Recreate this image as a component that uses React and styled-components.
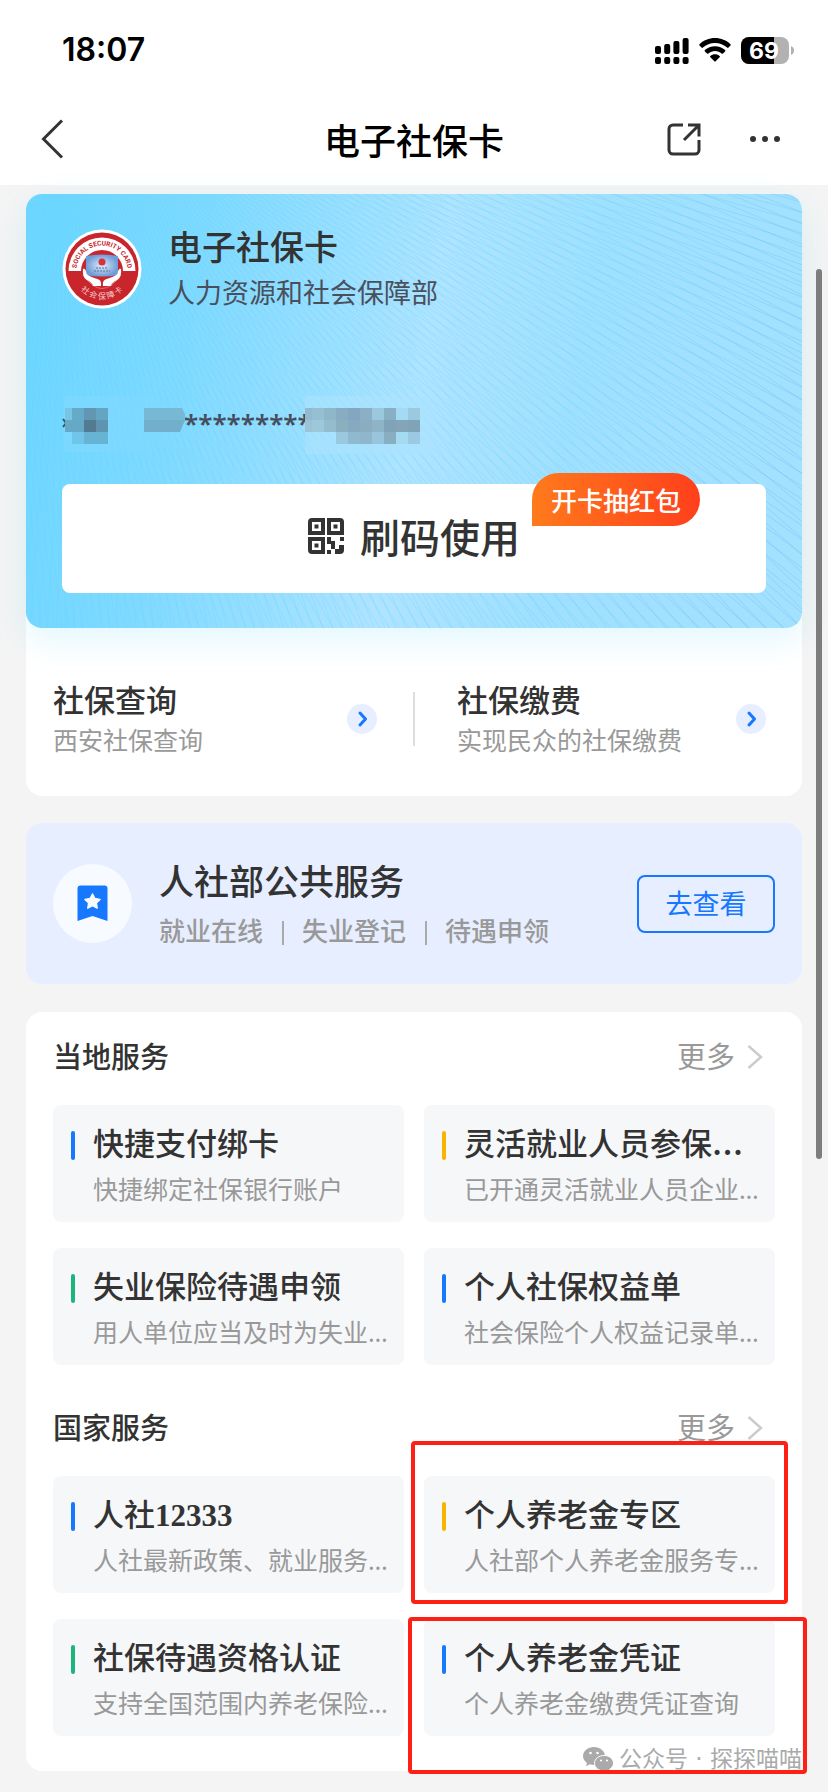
import React from 'react';
import styled, { createGlobalStyle, css } from 'styled-components';

const GlobalStyle = createGlobalStyle`
  * {
    box-sizing: border-box;
  }

  body {
    margin: 0;
    background: #f4f4f4;
    color: #333;
    font-family: 'Noto Sans CJK SC', sans-serif;
  }

  h1, h2, h3, p {
    margin: 0;
    font-weight: 500;
  }

  a {
    color: inherit;
    text-decoration: none;
  }

  button {
    padding: 0;
    border: 0;
    background: none;
    color: inherit;
    font-family: inherit;
    cursor: pointer;
  }

  svg {
    display: block;
    flex: none;
  }
`;

const Page = styled.div`
  position: relative;
  min-height: 100vh;
`;

const TopArea = styled.header`
  background: #fff;
`;

const StatusBar = styled.div`
  display: flex;
  align-items: center;
  justify-content: space-between;
  height: 98px;
  padding: 2px 34px 0 62px;
`;

const Clock = styled.time`
  color: #000;
  font: 600 32px/40px Inter, sans-serif;
`;

const StatusIcons = styled.div`
  display: flex;
  align-items: center;
  gap: 10px;
`;

const NavBar = styled.nav`
  display: grid;
  grid-template-columns: 1fr auto 1fr;
  align-items: center;
  height: 87px;
  padding: 0 40px 6px;
`;

const NavTitle = styled.h1`
  color: #000;
  font-size: 36px;
  line-height: 50px;
`;

const NavActions = styled.div`
  display: flex;
  align-items: center;
  justify-content: flex-end;
  gap: 48px;
  padding-right: 7px;
`;

const Main = styled.main`
  padding: 9px 26px 21px;
`;

const Panel = styled.section`
  position: relative;
  margin-bottom: 27px;
  background: #fff;
  border-radius: 16px;
`;

const Card = styled.div`
  position: relative;
  padding: 29px 36px 35px;
  border-radius: 16px;
  background: linear-gradient(100deg, #70d6ff 4%, #82d9ff 22%, #b0e3ff 50%, #a0e0ff 68%, #a2e2ff 100%);
  box-shadow: 0 12px 36px rgba(0, 190, 240, 0.12);
`;

const Guilloche = styled.svg`
  position: absolute;
  inset: 0;
  width: 100%;
  height: 100%;
  border-radius: 16px;
`;

const CardHead = styled.div`
  position: relative;
  display: flex;
  align-items: center;
  gap: 26px;
`;

const CardTitle = styled.h2`
  font-size: 34px;
  line-height: 46px;
`;

const CardOwner = styled.p`
  color: #4a4f5c;
  font-size: 27px;
  font-weight: 400;
  line-height: 46px;
`;

const CardNumber = styled.div`
  position: relative;
  display: flex;
  height: 60px;
  margin: 81px 0 28px;

  svg {
    position: relative;
  }
`;

const Stars = styled.span`
  margin: 0 -7px 0 -1px;
  color: #474c5c;
  font: 600 26px/54px 'Noto Sans', sans-serif;
`;

const ScanButton = styled.button`
  position: relative;
  display: flex;
  align-items: center;
  justify-content: center;
  gap: 16px;
  width: 100%;
  height: 109px;
  padding-bottom: 6px;
  border-radius: 8px;
  background: #fff;
  color: #333;
  font-size: 40px;
  font-weight: 500;
`;

const Badge = styled.span`
  position: absolute;
  top: -11px;
  right: 66px;
  padding: 0 19px;
  border-radius: 27px 27px 27px 0;
  background: linear-gradient(90deg, #ff7a1c, #ff3f1c);
  color: #fff;
  font-size: 26px;
  font-weight: 500;
  line-height: 53px;
`;

const QueryRow = styled.div`
  display: grid;
  grid-template-columns: 1fr 2px 1fr;
  align-items: center;
  padding: 51px 0 37px;
`;

const Divider = styled.span`
  height: 54px;
  background: #ddd;
`;

const QueryLink = styled.a`
  display: flex;
  align-items: center;
  justify-content: space-between;
  padding: 0 36px 0 ${props => (props.$second ? 42 : 27)}px;
`;

const titleStyle = css`
  font-size: 31px;
  line-height: 40px;
`;

const QueryTitle = styled.h3`
  ${titleStyle}
`;

const QueryText = styled.p`
  color: #999;
  font-size: 25px;
  font-weight: 400;
  line-height: 40px;
`;

const Banner = styled.section`
  display: flex;
  align-items: center;
  height: 161px;
  margin-bottom: 28px;
  padding: 0 27px;
  border-radius: 16px;
  background: #e7eeff;
`;

const BannerBody = styled.div`
  flex: 1;
  padding: 3px 0 0 27px;
`;

const BannerTitle = styled.h2`
  font-size: 35px;
  line-height: 50px;
`;

const BannerTags = styled.p`
  display: flex;
  align-items: center;
  gap: 19px;
  color: #999;
  font-size: 26px;
  font-weight: 500;
  line-height: 50px;

  span + span {
    position: relative;
    padding-left: 20px;

    &::before {
      content: '';
      position: absolute;
      left: 0;
      top: 16px;
      width: 2px;
      height: 24px;
      background: #aaa;
    }
  }
`;

const ViewButton = styled.button`
  width: 138px;
  height: 58px;
  padding-bottom: 2px;
  border: 2px solid #1677ff;
  border-radius: 8px;
  color: #1677ff;
  font-size: 27px;
`;

const ServicePanel = styled(Panel)`
  margin-bottom: 0;
  padding: 0 27px 35px;
`;

const SectionHead = styled.div`
  display: flex;
  align-items: center;
  justify-content: space-between;
  height: 86px;
  margin-bottom: 7px;
`;

const SectionTitle = styled.h2`
  font-size: 29px;
  line-height: 40px;
`;

const MoreLink = styled.a`
  display: flex;
  align-items: center;
  gap: 12px;
  padding-right: 12px;
  color: #999;
  font-size: 29px;
  line-height: 40px;

  svg {
    margin-top: 4px;
  }
`;

const TileGrid = styled.div`
  display: grid;
  grid-template-columns: 1fr 1fr;
  gap: 26px 20px;

  & + ${SectionHead} {
    margin-top: 18px;
  }
`;

const Tile = styled.a`
  position: relative;
  display: grid;
  grid-template-columns: 4px 1fr;
  column-gap: 18px;
  align-items: center;
  padding: 20px 0 15px 18px;
  border-radius: 8px;
  background: #f6f7f9;
  white-space: nowrap;
`;

const TileBar = styled.span`
  height: 29px;
  border-radius: 2px;
  background: ${props => props.$color};
`;

const TileTitle = styled.h3`
  ${titleStyle}
  font-family: 'Liberation Serif', 'Noto Sans CJK SC', serif;
`;

const TileText = styled.p`
  grid-column: 2;
  padding-top: 6px;
  color: #999;
  font-family: 'Noto Sans', 'Noto Sans CJK SC', sans-serif;
  font-size: 25px;
  font-weight: 400;
  line-height: 36px;
`;

const Mark = styled.span`
  position: absolute;
  z-index: 1;
  inset: ${props => props.$inset};
  border: 4px solid #ff2015;
  border-radius: 4px;
`;

const Watermark = styled.div`
  position: absolute;
  right: 0;
  bottom: -6px;
  display: flex;
  align-items: center;
  gap: 5px;
  color: #aaa;
  font-family: 'DejaVu Sans', 'Noto Sans CJK SC', sans-serif;
  font-size: 23px;
  line-height: 36px;
`;

const ScrollThumb = styled.div`
  position: absolute;
  top: 269px;
  right: 6px;
  width: 6px;
  height: 890px;
  border-radius: 3px;
  background: #7d7d7d;
`;

const BLUE = '#1677ff';
const YELLOW = '#fab400';
const GREEN = '#1cb57e';

const sections = [
  {
    title: '当地服务',
    tiles: [
      { title: '快捷支付绑卡', text: '快捷绑定社保银行账户', color: BLUE },
      { title: '灵活就业人员参保', more: '…', text: '已开通灵活就业人员企业…', color: YELLOW },
      { title: '失业保险待遇申领', text: '用人单位应当及时为失业…', color: GREEN },
      { title: '个人社保权益单', text: '社会保险个人权益记录单…', color: BLUE },
    ],
  },
  {
    title: '国家服务',
    tiles: [
      { title: '人社', more: '12333', text: '人社最新政策、就业服务…', color: BLUE },
      {
        title: '个人养老金专区',
        text: '人社部个人养老金服务专…',
        color: YELLOW,
        mark: '-35px -13px -11px -13px',
      },
      { title: '社保待遇资格认证', text: '支持全国范围内养老保险…', color: GREEN },
      {
        title: '个人养老金凭证',
        text: '个人养老金缴费凭证查询',
        color: BLUE,
        mark: '-2px -32px -38px -16px',
      },
    ],
  },
];

const SignalIcon = () => (
  <svg width="34" height="27" viewBox="0 0 34 27">
    {[9, 7, 4, 1].map((top, i) => (
      <g key={top}>
        <rect x={i * 9.2} y={top} width="6" height={17 - top} rx="2" />
        <rect x={i * 9.2} y="20" width="6" height="7" rx="2" />
      </g>
    ))}
  </svg>
);

const WifiIcon = () => (
  <svg width="32" height="24" viewBox="0 0 32 24">
    <path d="M16 0C10 0 4.500 2.300.5 6.200c-.4.400-.4 1 0 1.400l2 2c.4.400 1 .4 1.400 0C7.100 6.800 11.300 5 16 5s8.900 1.800 12.100 4.600c.4.400 1 .4 1.400 0l2-2c.4-.4.4-1 0-1.400C27.500 2.300 22 0 16 0z" />
    <path d="M16 8.200c-3.900 0-7.400 1.500-10.100 3.900-.4.400-.4 1 0 1.400l2.100 2c.4.400 1 .3 1.400 0 1.800-1.500 4.100-2.400 6.600-2.400s4.800.9 6.600 2.400c.4.300 1 .4 1.400 0l2.100-2c.4-.4.4-1 0-1.400-2.700-2.400-6.200-3.900-10.100-3.900z" />
    <path d="M16 16.200c-1.800 0-3.400.6-4.600 1.700-.5.400-.4 1 0 1.400l3.900 4c.4.400 1 .4 1.400 0l3.900-4c.4-.4.5-1 0-1.400-1.200-1.100-2.800-1.700-4.600-1.700z" />
  </svg>
);

const BatteryIcon = () => (
  <svg width="53" height="27" viewBox="0 0 53 27">
    <clipPath id="battery">
      <rect width="48" height="27" rx="8" />
    </clipPath>
    <g clipPath="url(#battery)">
      <rect width="48" height="27" fill="#b2b2b2" />
      <rect width="33" height="27" />
    </g>
    <path d="M50 9c2 .7 3 2.500 3 4.500s-1 3.800-3 4.500z" fill="#b2b2b2" />
    <text x="23" y="22" textAnchor="middle" fill="#fff" fontFamily="Inter" fontSize="23" fontWeight="700">
      69
    </text>
  </svg>
);

const BackIcon = () => (
  <svg width="24" height="40" viewBox="0 0 24 40" fill="none" stroke="#333" strokeWidth="3">
    <path d="M22 1.500L3.500 20 22 38.500" />
  </svg>
);

const ShareIcon = () => (
  <svg width="34" height="34" viewBox="0 0 34 34" fill="none" stroke="#333" strokeWidth="3">
    <path d="M16 3H6a4 4 0 0 0-4 4v21a4 4 0 0 0 4 4h22a4 4 0 0 0 4-4V18" />
    <path d="M21 3h11v11.500M31.500 3.500L17 18" />
  </svg>
);

const DotsIcon = () => (
  <svg width="32" height="8" viewBox="0 0 32 8" fill="#333">
    <circle cx="4" cy="4" r="3" />
    <circle cx="16" cy="4" r="3" />
    <circle cx="28" cy="4" r="3" />
  </svg>
);

const Logo = () => (
  <svg width="80" height="80" viewBox="0 0 80 80">
    <defs>
      <path id="arcTop" d="M14.500 42a25.500 25.500 0 0 1 51 0" />
      <path id="arcBottom" d="M10 40a30 30 0 0 0 60 0" />
      <radialGradient id="screen">
        <stop offset="0" stopColor="#e3edf9" />
        <stop offset="1" stopColor="#6f9cd8" />
      </radialGradient>
    </defs>
    <circle cx="40" cy="40" r="39.500" fill="#fff" />
    <circle cx="40" cy="40" r="36.500" fill="#c9252d" />
    <path d="M6.500 42a33.500 33.500 0 0 1 67 0H61a21 21 0 0 0-42 0z" fill="#fff" />
    <text fill="#c9252d" fontFamily="Roboto, sans-serif" fontSize="6.600" fontWeight="700">
      <textPath href="#arcTop" startOffset="50%" textAnchor="middle">
        SOCIAL SECURITY CARD
      </textPath>
    </text>
    <text fill="#f6c9cb" fontFamily="Noto Sans CJK SC" fontSize="8">
      <textPath href="#arcBottom" startOffset="50%" textAnchor="middle">
        社 会 保 障 卡
      </textPath>
    </text>
    <path d="M21 46q19 27 38 0" fill="none" stroke="#e58a8e" strokeWidth=".7" />
    <path d="M24 27q16-3 32 0v19q-16 3-32 0z" fill="url(#screen)" />
    <circle cx="40" cy="33" r="3.500" fill="#d9303a" />
    <path d="M32 42h16M34 39h12" stroke="#5670a0" strokeWidth="1.200" strokeDasharray="2 1" />
    <path d="M21 40c2-1 3 1 3.500 5 4 3 8 4 11 5 3 1 4 3 3.500 7h-8c-.5-3-3-4-6-6-3.500-2-4.500-6-4-11z" fill="#fff" />
    <path d="M59 40c-2-1-3 1-3.500 5-4 3-8 4-11 5-3 1-4 3-3.500 7h8c.5-3 3-4 6-6 3.500-2 4.500-6 4-11z" fill="#fff" />
  </svg>
);

// fans of thin lines that cross each other at a small angle
const fan = (x, y, count) =>
  Array.from({ length: count }, (_, i) => {
    const angle = (-4 + (i * 100) / count) * (Math.PI / 180);
    const dx = Math.cos(angle) * 1100;
    const dy = Math.sin(angle) * 1100;
    return `M${x} ${y}q${(dx * 0.5 + dy * 0.05).toFixed(1)} ${(dy * 0.5 - dx * 0.05).toFixed(1)} ${dx.toFixed(1)} ${dy.toFixed(1)}`;
  }).join('');

const CardLines = () => (
  <Guilloche viewBox="0 0 776 434" preserveAspectRatio="xMidYMid slice" fill="none">
    <defs>
      <linearGradient id="lines" gradientUnits="userSpaceOnUse" x1="0" y1="0" x2="776" y2="200">
        <stop offset="0" stopColor="#56d5ff" stopOpacity=".3" />
        <stop offset=".6" stopColor="#62dffc" stopOpacity=".38" />
        <stop offset="1" stopColor="#78bdf2" stopOpacity=".45" />
      </linearGradient>
    </defs>
    <g stroke="url(#lines)">
      <path d={fan(-60, -150, 150)} />
      <path d={fan(20, -220, 130)} />
    </g>
  </Guilloche>
);

const MaskLeft = () => (
  <svg width="123" height="60" viewBox="0 0 123 60">
    <path d="M2 0h82q28 8 37 27-9 23-37 29H2z" fill="#80d9ff" opacity=".6" />
    <path d="M1 23l3 4-3 4" stroke="#474c5c" fill="none" strokeWidth="2" />
    <path d="M3 12h7v12H3z" fill="#78c4e4" />
    <path d="M10 12h12v12H10z" fill="#66aac9" />
    <path d="M22 12h12v12H22z" fill="#6297b3" />
    <path d="M34 12h12v12H34z" fill="#65a5c4" />
    <path d="M3 24h19v12H3z" fill="#66a9c7" />
    <path d="M22 24h12v12H22z" fill="#527a91" />
    <path d="M34 24h12v12H34z" fill="#5e94b0" />
    <path d="M10 36h12v12H10z" fill="#70c5ea" />
    <path d="M22 36h24v12H22z" fill="#67b3d4" />
    <path d="M82 12h38l3 6v6H82z" fill="#77b9d5" />
    <path d="M82 24h41l-5 12H82z" fill="#71afcb" />
  </svg>
);

const maskCells = [
  ['#95bfd3', '#8fb7ca', '#88adc3', '#84a6c0', '#8bafc5', '#9ac9df', '#88afc3', '#a4daf4', '#9bc9e0'],
  ['#9dc7da', '#94bccd', '#8aafbf', '#86aac0', '#8badc0', '#8fb4c8', '#80a3b8', '#83a5b7', '#80a3b6'],
  ['none', 'none', '#9ac8df', '#8fb9ce', '#8fb6cb', '#98c5dc', '#88aec2', '#a4daf2', '#9bc9e1'],
];

const MaskRight = () => (
  <svg width="130" height="60" viewBox="0 0 130 60">
    <path d="M0 0h128v58H0z" fill="#abe3fe" opacity=".6" />
    <path d="M0 12h7v12H0z" fill="#92b9cd" />
    <path d="M0 24h7v12H0z" fill="#9bc3d5" />
    {maskCells.map((row, y) =>
      row.map((fill, x) => (
        <rect key={`${x}-${y}`} x={x * 12 + 7} y={y * 12 + 12} width="12" height="12" fill={fill} />
      ))
    )}
  </svg>
);

const QrIcon = () => (
  <svg width="36" height="36" viewBox="0 0 36 36" fill="#333">
    <path
      fillRule="evenodd"
      d="M4 0h13v17H0V4a4 4 0 0 1 4-4zM4 4v9h9V4zM19 0h13a4 4 0 0 1 4 4v13H19zM23 4v9h9V4zM0 19h17v17H4a4 4 0 0 1-4-4zM4 23v9h9v-9z"
    />
    <path d="M6.500 6.500h4v4h-4zM25.500 6.500h4v4h-4zM6.500 25.500h4v4h-4z" />
    <path d="M19 19h4v4h4v8h-4v-5h-4zM32 19h4v4h-4zM19 32h4v4h-4zM27 31h4v-4h5v5a4 4 0 0 1-4 4h-5z" />
  </svg>
);

const CircleArrow = () => (
  <svg width="30" height="30" viewBox="0 0 30 30" fill="none">
    <circle cx="15" cy="15" r="15" fill="#e7eeff" />
    <path d="M13 9l5.500 6-5.500 6" stroke="#1677ff" strokeWidth="3" strokeLinecap="round" strokeLinejoin="round" />
  </svg>
);

const BookmarkIcon = () => (
  <svg width="79" height="79" viewBox="0 0 79 79">
    <circle cx="39.500" cy="39.500" r="39.500" fill="#f7faff" />
    <path d="M27.500 21.500h24a3 3 0 0 1 3 3V57l-15-5-15 5V24.500a3 3 0 0 1 3-3z" fill="#1677ff" />
    <path
      d="M39.500 30l2.400 4.600 5.100.8-3.700 3.600.9 5.100-4.700-2.400-4.700 2.400.9-5.100-3.700-3.600 5.100-.8z"
      fill="#f7faff"
      stroke="#f7faff"
      strokeWidth="1.500"
      strokeLinejoin="round"
    />
  </svg>
);

const MoreIcon = () => (
  <svg width="16" height="24" viewBox="0 0 16 24" fill="none">
    <path d="M1.500 1L14 12 1.500 23" stroke="#ccc" strokeWidth="2.500" />
  </svg>
);

const WechatIcon = () => (
  <svg width="31" height="25" viewBox="0 0 31 25">
    <path d="M11 0C4.900 0 0 4 0 9c0 2.800 1.600 5.300 4 7l-1 3.300 3.900-2c1.300.4 2.700.6 4.100.6C17 18 22 14 22 9S17 0 11 0z" fill="#aaa" />
    <path d="M21 8.500c-5.300 0-9.500 3.400-9.500 7.800s4.200 7.700 9.500 7.700c1.100 0 2.200-.2 3.300-.5l3.200 1.500-.8-2.700c2.300-1.500 3.800-3.600 3.800-6 0-4.400-4.200-7.800-9.500-7.800z" fill="#aaa" stroke="#fff" strokeWidth="1" />
    <g fill="#fff">
      <circle cx="7.500" cy="6" r="1.300" />
      <circle cx="14.500" cy="6" r="1.300" />
      <circle cx="18" cy="13.500" r="1.100" />
      <circle cx="24" cy="13.500" r="1.100" />
    </g>
  </svg>
);

const Section = ({ title, tiles }) => (
  <>
    <SectionHead>
      <SectionTitle>{title}</SectionTitle>
      <MoreLink href="#more">
        更多
        <MoreIcon />
      </MoreLink>
    </SectionHead>
    <TileGrid>
      {tiles.map(tile => (
        <Tile href="#service" key={tile.title}>
          <TileBar $color={tile.color} />
          <TileTitle>
            {tile.title}
            {tile.more && <b>{tile.more}</b>}
          </TileTitle>
          <TileText>{tile.text}</TileText>
          {tile.mark && <Mark $inset={tile.mark} />}
        </Tile>
      ))}
    </TileGrid>
  </>
);

const App = () => {
  return (
    <Page>
      <GlobalStyle />
      <TopArea>
        <StatusBar>
          <Clock>18:07</Clock>
          <StatusIcons>
            <SignalIcon />
            <WifiIcon />
            <BatteryIcon />
          </StatusIcons>
        </StatusBar>
        <NavBar>
          <button aria-label="返回">
            <BackIcon />
          </button>
          <NavTitle>电子社保卡</NavTitle>
          <NavActions>
            <button aria-label="分享">
              <ShareIcon />
            </button>
            <button aria-label="菜单">
              <DotsIcon />
            </button>
          </NavActions>
        </NavBar>
      </TopArea>

      <Main>
        <Panel>
          <Card>
            <CardLines />
            <CardHead>
              <Logo />
              <div>
                <CardTitle>电子社保卡</CardTitle>
                <CardOwner>人力资源和社会保障部</CardOwner>
              </div>
            </CardHead>
            <CardNumber>
              <MaskLeft />
              <Stars>*********</Stars>
              <MaskRight />
            </CardNumber>
            <ScanButton>
              <QrIcon />
              刷码使用
              <Badge>开卡抽红包</Badge>
            </ScanButton>
          </Card>
          <QueryRow>
            <QueryLink href="#query">
              <div>
                <QueryTitle>社保查询</QueryTitle>
                <QueryText>西安社保查询</QueryText>
              </div>
              <CircleArrow />
            </QueryLink>
            <Divider />
            <QueryLink href="#pay" $second>
              <div>
                <QueryTitle>社保缴费</QueryTitle>
                <QueryText>实现民众的社保缴费</QueryText>
              </div>
              <CircleArrow />
            </QueryLink>
          </QueryRow>
        </Panel>

        <Banner>
          <BookmarkIcon />
          <BannerBody>
            <BannerTitle>人社部公共服务</BannerTitle>
            <BannerTags>
              <span>就业在线</span>
              <span>失业登记</span>
              <span>待遇申领</span>
            </BannerTags>
          </BannerBody>
          <ViewButton>去查看</ViewButton>
        </Banner>

        <ServicePanel>
          {sections.map(section => (
            <Section key={section.title} {...section} />
          ))}
          <Watermark>
            <WechatIcon />
            公众号 · 探探喵喵
          </Watermark>
        </ServicePanel>
      </Main>
      <ScrollThumb />
    </Page>
  );
};

export default App;
